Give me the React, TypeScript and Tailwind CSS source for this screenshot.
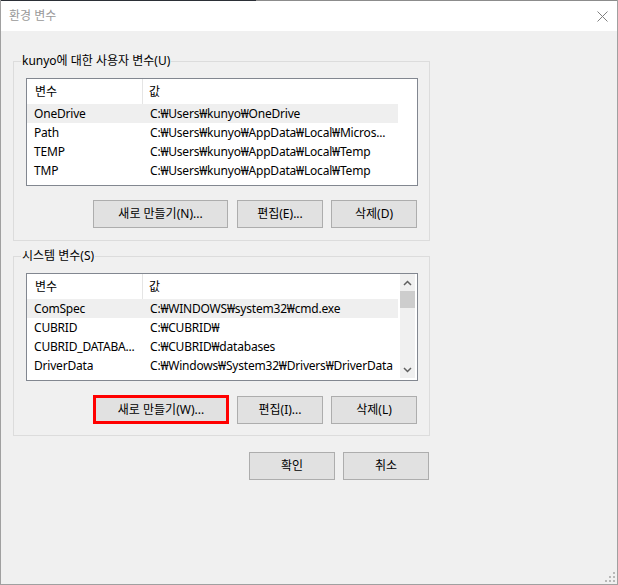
import React from 'react';

const font = "font-['Noto_Sans','Noto_Sans_CJK_KR',sans-serif]";

const userVars = [
  ['OneDrive', 'C:₩Users₩kunyo₩OneDrive'],
  ['Path', 'C:₩Users₩kunyo₩AppData₩Local₩Micros...'],
  ['TEMP', 'C:₩Users₩kunyo₩AppData₩Local₩Temp'],
  ['TMP', 'C:₩Users₩kunyo₩AppData₩Local₩Temp'],
];

const sysVars = [
  ['ComSpec', 'C:₩WINDOWS₩system32₩cmd.exe'],
  ['CUBRID', 'C:₩CUBRID₩'],
  ['CUBRID_DATABA...', 'C:₩CUBRID₩databases'],
  ['DriverData', 'C:₩Windows₩System32₩Drivers₩DriverData'],
];

function Btn({ label, w, red }: { label: string; w: string; red?: boolean }) {
  return (
    <button
      className={
        red
          ? `${w} h-[29px] bg-[#e1e1e1] border-[3px] border-[#ff0000] text-[12px] leading-none text-black`
          : `${w} h-[28px] bg-[#e1e1e1] border border-[#adadad] text-[12px] leading-none text-black`
      }
    >
      {label}
    </button>
  );
}

function VarList({ rows, scroll }: { rows: string[][]; scroll?: boolean }) {
  return (
    <div className="ml-[12px] w-[392px] h-[108px] border border-[#828790] bg-white flex overflow-hidden">
      <div className="w-[371px] flex flex-col">
        <div className="h-[25px] flex items-center">
          <div className="w-[116px] h-full pl-[8px] flex items-center border-r border-[#e5e5e5]">변수</div>
          <div className="pl-[6px]">값</div>
        </div>
        {rows.map(([k, v], i) => (
          <div
            key={k}
            className={`h-[19px] flex items-center whitespace-nowrap tracking-[-0.2px] ${i === 0 ? 'bg-[#efefef]' : ''}`}
          >
            <div className="w-[123px] shrink-0 pl-[7px] overflow-hidden">{k}</div>
            <div className="whitespace-nowrap">{v}</div>
          </div>
        ))}
      </div>
      {scroll && (
        <div className="ml-[2px] w-[15px] h-[104px] bg-[#f0f0f0] flex flex-col items-center">
          <svg width="15" height="17" viewBox="0 0 15 17">
            <path d="M4 11 L7.5 7.5 L11 11" fill="none" stroke="#606060" strokeWidth="1.5" />
          </svg>
          <div className="w-[15px] h-[17px] bg-[#cdcdcd]" />
          <div className="flex-1" />
          <svg width="15" height="17" viewBox="0 0 15 17">
            <path d="M4 7 L7.5 10.5 L11 7" fill="none" stroke="#606060" strokeWidth="1.5" />
          </svg>
        </div>
      )}
    </div>
  );
}

export default function App() {
  return (
    <div className={`${font} relative w-[618px] h-[585px] flex flex-col bg-[#f0f0f0] border-x border-b border-[#a0a0a0] text-[12px] text-black`}>
      <div className="flex h-px">
        <div className="w-[255px] bg-[#2b2f36]" />
        <div className="flex-1 bg-[#8c8c8c]" />
      </div>
      <div className="h-[30px] bg-white flex items-center justify-between pl-[8px] pr-[9px]">
        <span className="text-[12px] text-[#999999]">환경 변수</span>
        <svg width="11" height="11" viewBox="0 0 11 11">
          <path d="M0.5 0.5 L10.5 10.5 M10.5 0.5 L0.5 10.5" stroke="#808080" strokeWidth="1" />
        </svg>
      </div>

      <div className="flex flex-col pl-[12px] pt-[22px]">
        <fieldset className="w-[417px] border border-[#dcdcdc] pb-[12px]">
          <legend className="ml-[7px] px-[1px] leading-[16px]">kunyo에 대한 사용자 변수(U)</legend>
          <div className="mt-[9px]">
            <VarList rows={userVars} />
          </div>
          <div className="mt-[14px] flex justify-end gap-[8px] pr-[12px]">
            <Btn label="새로 만들기(N)..." w="w-[135px] mr-[1px]" />
            <Btn label="편집(E)..." w="w-[86px]" />
            <Btn label="삭제(D)" w="w-[86px]" />
          </div>
        </fieldset>

        <fieldset className="mt-[7px] w-[417px] border border-[#dcdcdc] pb-[11px]">
          <legend className="ml-[7px] px-[1px] leading-[16px]">시스템 변수(S)</legend>
          <div className="mt-[9px]">
            <VarList rows={sysVars} scroll />
          </div>
          <div className="mt-[14px] flex items-center justify-end gap-[8px] pr-[12px]">
            <Btn label="새로 만들기(W)..." w="w-[136px]" red />
            <Btn label="편집(I)..." w="w-[86px]" />
            <Btn label="삭제(L)" w="w-[86px]" />
          </div>
        </fieldset>

        <div className="mt-[16px] w-[416px] flex justify-end gap-[8px]">
          <Btn label="확인" w="w-[86px]" />
          <Btn label="취소" w="w-[86px]" />
        </div>
      </div>

      <svg className="absolute right-[1px] bottom-[1px]" width="11" height="11" viewBox="0 0 11 11">
        <g fill="#b8b8b8">
          <rect x="8" y="0" width="2" height="2" />
          <rect x="4" y="4" width="2" height="2" />
          <rect x="8" y="4" width="2" height="2" />
          <rect x="0" y="8" width="2" height="2" />
          <rect x="4" y="8" width="2" height="2" />
          <rect x="8" y="8" width="2" height="2" />
        </g>
      </svg>
    </div>
  );
}
